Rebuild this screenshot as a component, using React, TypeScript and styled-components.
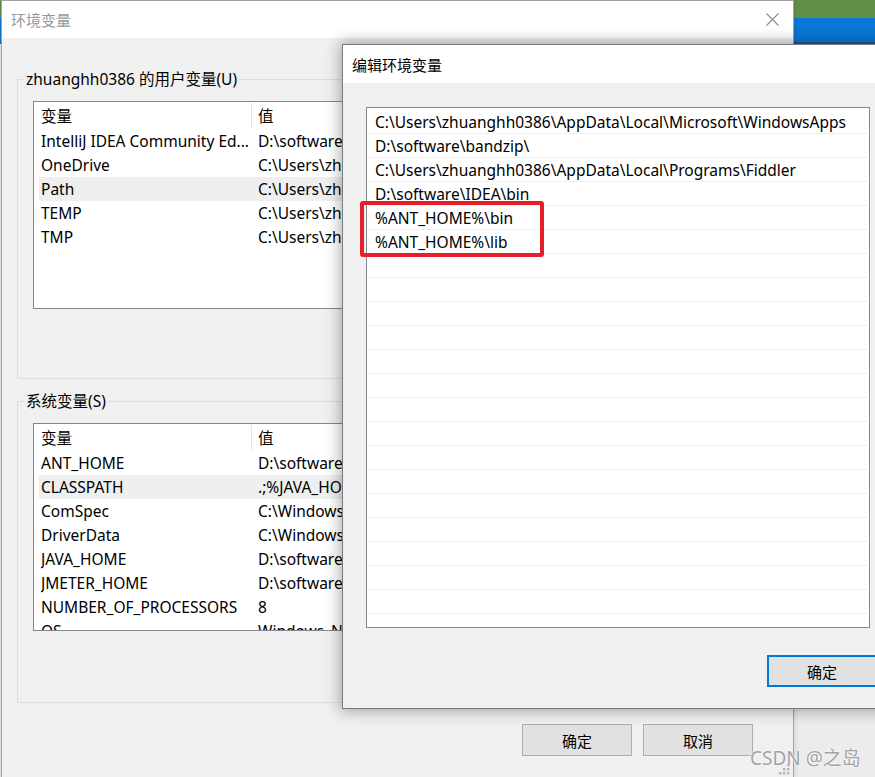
import React from "react";
import styled, { createGlobalStyle } from "styled-components";

const Global = createGlobalStyle`
  html, body { margin: 0; padding: 0; background: #ededed; }
  * { box-sizing: border-box; }
`;

const FONT = `"Noto Sans", "Noto Sans CJK SC", sans-serif`;

const Desktop = styled.div`
  position: relative;
  width: 875px;
  height: 777px;
  overflow: hidden;
  font-family: ${FONT};
  font-size: 15.5px;
  color: #000;
  background: linear-gradient(
    to bottom,
    #648f46 0 18px,
    #0a78d8 18px 42px,
    #23599a 42px 44px,
    #ececec 44px
  );
`;

const Window = styled.div<{ $left: number; $top: number; $width: number; $height: number; $active?: boolean }>`
  position: absolute;
  left: ${(p) => p.$left}px;
  top: ${(p) => p.$top}px;
  width: ${(p) => p.$width}px;
  height: ${(p) => p.$height}px;
  background: #f0f0f0;
  border: 1px solid ${(p) => (p.$active ? "#7a7a7a" : "#a3a3a3")};
  box-shadow: ${(p) => (p.$active ? "0 0 14px 2px rgba(0,0,0,0.32)" : "0 0 6px rgba(0,0,0,0.15)")};
  display: flex;
  flex-direction: column;
`;

const TitleBar = styled.div<{ $height: number; $active?: boolean }>`
  height: ${(p) => p.$height}px;
  flex: none;
  background: #fff;
  display: flex;
  align-items: center;
  justify-content: space-between;
  padding-left: 9px;
  color: ${(p) => (p.$active ? "#000" : "#999")};
  font-size: 15px;
`;

const CloseBox = styled.div`
  width: 42px;
  height: 100%;
  display: flex;
  align-items: center;
  justify-content: center;
`;

const MainBody = styled.div`
  flex: 1;
  display: flex;
  flex-direction: column;
  padding: 0 15px;
`;

const Group = styled.div<{ $mt: number; $h: number }>`
  margin-top: ${(p) => p.$mt}px;
  height: ${(p) => p.$h}px;
  border: 1px solid #dcdcdc;
  padding: 0 15px;
  flex: none;
`;

const Legend = styled.div`
  width: fit-content;
  height: 20px;
  line-height: 20px;
  margin: -11px 0 0 -9px;
  padding: 0 2px;
  background: #f0f0f0;
  white-space: nowrap;
`;

const ListBox = styled.div`
  margin-top: 12px;
  height: 208px;
  background: #fff;
  border: 1px solid #828790;
  overflow: hidden;
`;

const HeaderRow = styled.div`
  height: 27px;
  display: grid;
  grid-template-columns: 218px 1fr;
  align-items: stretch;
`;

const HeaderCell = styled.div<{ $first?: boolean }>`
  display: flex;
  align-items: center;
  padding-left: ${(p) => (p.$first ? 7 : 6)}px;
  border-right: ${(p) => (p.$first ? "1px solid #e5e5e5" : "none")};
  margin: 1px 0;
  white-space: nowrap;
`;

const VarRow = styled.div<{ $selected?: boolean }>`
  height: 24px;
  margin-left: 5px;
  padding-left: 2px;
  display: grid;
  grid-template-columns: 217px 1fr;
  align-items: center;
  background: ${(p) => (p.$selected ? "#efefef" : "transparent")};
  white-space: nowrap;
  overflow: hidden;
`;

const Cell = styled.div`
  overflow: hidden;
  white-space: nowrap;
`;

const ButtonRow = styled.div<{ $mt: number; $pr: number }>`
  margin-top: ${(p) => p.$mt}px;
  padding-right: ${(p) => p.$pr}px;
  display: flex;
  justify-content: flex-end;
  gap: 11px;
  flex: none;
`;

const Button = styled.div<{ $primary?: boolean }>`
  width: 110px;
  height: 32px;
  flex: none;
  display: flex;
  align-items: center;
  justify-content: center;
  background: #e1e1e1;
  border: ${(p) => (p.$primary ? "2px solid #0078d7" : "1px solid #adadad")};
  font-size: 15px;
`;

const EditBody = styled.div`
  flex: 1;
  display: flex;
  flex-direction: column;
  padding: 24px 23px 0 23px;
`;

const EditTop = styled.div`
  display: flex;
  gap: 18px;
`;

const ListWrap = styled.div`
  position: relative;
  flex: none;
`;

const PathList = styled.div`
  width: 504px;
  height: 521px;
  background: #fff;
  border: 1px solid #828790;
  padding: 2px 1px 0;
  overflow: hidden;
`;

const PathRow = styled.div`
  height: 24px;
  border-bottom: 1px solid #f0f0f0;
  padding-left: 7px;
  display: flex;
  align-items: center;
  white-space: nowrap;
`;

const SideButtons = styled.div`
  display: flex;
  flex-direction: column;
  gap: 9px;
`;

const Highlight = styled.div`
  position: absolute;
  left: -6px;
  top: 94px;
  width: 184px;
  height: 56px;
  border: 4px solid #e5202a;
  border-radius: 3px;
`;

const Watermark = styled.div`
  position: absolute;
  left: 750px;
  top: 746px;
  font-size: 19px;
  line-height: 24px;
  color: #a2a2a2;
  text-shadow: 0 0 2px #fff, 0 0 1px #fff;
  white-space: nowrap;
`;

const Grip = styled.svg`
  position: absolute;
  right: 3px;
  bottom: 1px;
`;

const userVars: [string, string][] = [
  ["IntelliJ IDEA Community Ed...", "D:\\software\\IDEA\\bin;"],
  ["OneDrive", "C:\\Users\\zhuanghh0386\\OneDrive"],
  ["Path", "C:\\Users\\zhuanghh0386\\AppData\\Local\\Microsoft\\WindowsApps;"],
  ["TEMP", "C:\\Users\\zhuanghh0386\\AppData\\Local\\Temp"],
  ["TMP", "C:\\Users\\zhuanghh0386\\AppData\\Local\\Temp"],
];

const sysVars: [string, string][] = [
  ["ANT_HOME", "D:\\software\\apache-ant-1.10.12"],
  ["CLASSPATH", ".;%JAVA_HOME%\\lib\\dt.jar;%JAVA_HOME%\\lib\\tools.jar;"],
  ["ComSpec", "C:\\Windows\\system32\\cmd.exe"],
  ["DriverData", "C:\\Windows\\System32\\Drivers\\DriverData"],
  ["JAVA_HOME", "D:\\software\\java\\jdk1.8.0"],
  ["JMETER_HOME", "D:\\software\\apache-jmeter-5.4"],
  ["NUMBER_OF_PROCESSORS", "8"],
  ["OS", "Windows_NT"],
];

const paths = [
  "C:\\Users\\zhuanghh0386\\AppData\\Local\\Microsoft\\WindowsApps",
  "D:\\software\\bandzip\\",
  "C:\\Users\\zhuanghh0386\\AppData\\Local\\Programs\\Fiddler",
  "D:\\software\\IDEA\\bin",
  "%ANT_HOME%\\bin",
  "%ANT_HOME%\\lib",
];

const VarList: React.FC<{ rows: [string, string][]; selected: number }> = ({ rows, selected }) => (
  <ListBox>
    <HeaderRow>
      <HeaderCell $first>变量</HeaderCell>
      <HeaderCell>值</HeaderCell>
    </HeaderRow>
    {rows.map(([k, v], i) => (
      <VarRow key={k} $selected={i === selected}>
        <Cell>{k}</Cell>
        <Cell>{v}</Cell>
      </VarRow>
    ))}
  </ListBox>
);

const CloseIcon = () => (
  <svg width="13" height="13" viewBox="0 0 13 13">
    <path d="M0.5 0.5 L12.5 12.5 M12.5 0.5 L0.5 12.5" stroke="#8a8a8a" strokeWidth="1.1" fill="none" />
  </svg>
);

export default function App() {
  const rows = Array.from({ length: 22 }, (_, i) => paths[i] ?? "");
  return (
    <Desktop>
      <Global />
      <Window $left={1} $top={0} $width={793} $height={778}>
        <TitleBar $height={37}>
          <span>环境变量</span>
          <CloseBox>
            <CloseIcon />
          </CloseBox>
        </TitleBar>
        <MainBody>
          <Group $mt={41} $h={300}>
            <Legend>zhuanghh0386 的用户变量(U)</Legend>
            <VarList rows={userVars} selected={2} />
          </Group>
          <Group $mt={22} $h={302}>
            <Legend>系统变量(S)</Legend>
            <VarList rows={sysVars} selected={1} />
          </Group>
          <ButtonRow $mt={21} $pr={25}>
            <Button>确定</Button>
            <Button>取消</Button>
          </ButtonRow>
        </MainBody>
        <Grip width="12" height="12" viewBox="0 0 12 12">
          {[
            [9, 0], [9, 4], [5, 4], [9, 8], [5, 8], [1, 8],
          ].map(([x, y]) => (
            <rect key={`${x}-${y}`} x={x} y={y} width="2.5" height="2.5" fill="#b8b8b8" />
          ))}
        </Grip>
      </Window>

      <Window $left={342} $top={44} $width={680} $height={665} $active>
        <TitleBar $height={38} $active>
          <span>编辑环境变量</span>
        </TitleBar>
        <EditBody>
          <EditTop>
            <ListWrap>
              <PathList>
                {rows.map((p, i) => (
                  <PathRow key={i}>{p}</PathRow>
                ))}
              </PathList>
              <Highlight />
            </ListWrap>
            <SideButtons>
              <Button>新建(N)</Button>
              <Button>编辑(E)</Button>
              <Button>浏览(B)...</Button>
              <Button>删除(D)</Button>
            </SideButtons>
          </EditTop>
          <ButtonRow $mt={27} $pr={0}>
            <Button $primary>确定</Button>
            <Button>取消</Button>
          </ButtonRow>
        </EditBody>
      </Window>

      <Watermark>CSDN @之岛</Watermark>
    </Desktop>
  );
}
